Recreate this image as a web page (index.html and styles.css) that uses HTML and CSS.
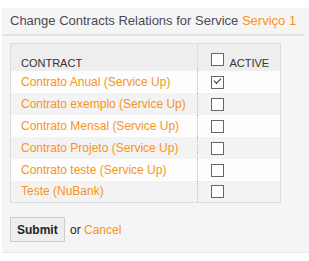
FILE: index.html
```html
<!DOCTYPE html>
<html lang="en">
<head>
    <meta charset="UTF-8">
    <title>Change Contracts Relations</title>
    <link rel="stylesheet" href="styles.css">
</head>
<body>

<div class="panel">
    <h2 class="panel-title">Change Contracts Relations for Service <a href="#">Serviço 1</a></h2>
    <form class="relations-form">
        <table class="relations">
            <thead>
                <tr>
                    <th class="col-contract">Contract</th>
                    <th class="col-active"><input type="checkbox" class="check"> Active</th>
                </tr>
            </thead>
            <tbody>
                <tr>
                    <td><a href="#">Contrato Anual (Service Up)</a></td>
                    <td class="col-active"><input type="checkbox" class="check" checked></td>
                </tr>
                <tr>
                    <td><a href="#">Contrato exemplo (Service Up)</a></td>
                    <td class="col-active"><input type="checkbox" class="check"></td>
                </tr>
                <tr>
                    <td><a href="#">Contrato Mensal (Service Up)</a></td>
                    <td class="col-active"><input type="checkbox" class="check"></td>
                </tr>
                <tr>
                    <td><a href="#">Contrato Projeto (Service Up)</a></td>
                    <td class="col-active"><input type="checkbox" class="check"></td>
                </tr>
                <tr>
                    <td><a href="#">Contrato teste (Service Up)</a></td>
                    <td class="col-active"><input type="checkbox" class="check"></td>
                </tr>
                <tr>
                    <td><a href="#">Teste (NuBank)</a></td>
                    <td class="col-active"><input type="checkbox" class="check"></td>
                </tr>
            </tbody>
        </table>
        <div class="actions">
            <button type="submit" class="btn">Submit</button> or <a href="#">Cancel</a>
        </div>
    </form>
</div>

</body>
</html>
```

FILE: styles.css
```css
body {
    margin: 0;
    font-family: "Liberation Sans", Arial, sans-serif;
    font-size: 12px;
    color: #222;
    background: #fff;
}
a {
    color: #f7941d;
    text-decoration: none;
}
.panel {
    margin: 8px 0 0 2px;
    background: #f5f5f5;
    border-bottom: 1px solid #e8e8e8;
    height: 245px;
    box-sizing: border-box;
}
.panel-title {
    margin: 0 4px 0 0;
    padding: 5px 8px 6px;
    font-size: 13px;
    line-height: 15px;
    font-weight: normal;
    color: #4a4a55;
    border-bottom: 2px solid #e2e2e2;
}
.relations-form {
    padding: 7px 8px 0;
}
.relations {
    border-collapse: collapse;
    width: 271px;
    border: 1px solid #ddd;
}
.relations thead tr {
    height: 27px;
}
.relations th {
    background: #eee;
    font-weight: normal;
    text-transform: uppercase;
    font-size: 11px;
    color: #333;
    text-align: left;
    white-space: nowrap;
    padding: 0 10px 2px;
    vertical-align: bottom;
}
.relations th.col-contract {
    width: 166px;
}
.relations th .check {
    vertical-align: baseline;
    margin: 0 3px 1px 0;
}
.relations tbody tr {
    height: 22px;
}
.relations td {
    padding: 0 10px;
    font-size: 12px;
}
.relations tbody tr:nth-child(odd) td {
    background: #fdfdfd;
}
.relations tbody tr:nth-child(even) td {
    background: #f3f3f3;
}
.relations .col-active {
    border-left: 1px dotted #bbb;
    padding-left: 13px;
    padding-right: 4px;
}
.relations th.col-active {
    border-left: 1px solid #ddd;
}
.check {
    appearance: none;
    -webkit-appearance: none;
    width: 13px;
    height: 13px;
    margin: 0;
    border: 1px solid #666;
    background: #fff;
    vertical-align: middle;
    position: relative;
}
.check:checked::after {
    content: "";
    position: absolute;
    left: 2px;
    top: 1px;
    width: 6px;
    height: 3px;
    border-left: 1.5px solid #333;
    border-bottom: 1.5px solid #333;
    transform: rotate(-45deg);
}
.actions {
    margin-top: 14px;
    font-size: 12px;
}
.btn {
    font-family: inherit;
    font-size: 12px;
    font-weight: bold;
    color: #222;
    background: #eee;
    border: 1px solid #ccc;
    height: 25px;
    padding: 0 6px;
    margin-right: 2px;
}
```
